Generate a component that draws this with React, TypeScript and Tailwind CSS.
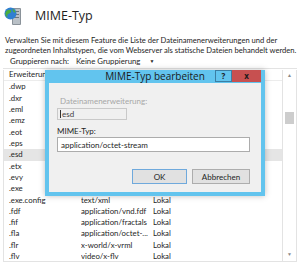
import React from 'react';

type Row = { ext: string; mime: string; sel?: boolean };

const rows: Row[] = [
  { ext: '.dwp', mime: 'application/octet-...' },
  { ext: '.dxr', mime: 'application/x-director' },
  { ext: '.eml', mime: 'message/rfc822' },
  { ext: '.emz', mime: 'application/octet-...' },
  { ext: '.eot', mime: 'application/vnd.ms-...' },
  { ext: '.eps', mime: 'application/postscript' },
  { ext: '.esd', mime: 'application/octet-...', sel: true },
  { ext: '.etx', mime: 'text/x-setext' },
  { ext: '.evy', mime: 'application/envoy' },
  { ext: '.exe', mime: 'application/octet-...' },
  { ext: '.exe.config', mime: 'text/xml' },
  { ext: '.fdf', mime: 'application/vnd.fdf' },
  { ext: '.fif', mime: 'application/fractals' },
  { ext: '.fla', mime: 'application/octet-...' },
  { ext: '.flr', mime: 'x-world/x-vrml' },
  { ext: '.flv', mime: 'video/x-flv' },
];

function MimeIcon() {
  return (
    <svg width="19" height="20" viewBox="0 0 19 20">
      <rect x="8" y="2" width="9" height="17" rx="1" fill="#8a9299" />
      <rect x="9" y="3" width="7" height="15" fill="#b9c0c6" />
      <rect x="10" y="5" width="5" height="1" fill="#6d757c" />
      <rect x="10" y="8" width="5" height="1" fill="#6d757c" />
      <rect x="10" y="11" width="5" height="1" fill="#6d757c" />
      <circle cx="6.5" cy="7.5" r="6" fill="#2f7fd1" />
      <path d="M3 4.5c1.5-1 3-1 4 0s-.5 2.5-2 3-2.5 2-1.5 3.5S2 11 1.5 9 1.8 5.4 3 4.5z" fill="#4caf3c" />
      <path d="M8.5 3c1.5.3 3 1.6 3 3.5-1 .4-2-.3-2.3-1.3S8 3.8 8.5 3z" fill="#4caf3c" />
    </svg>
  );
}

export default function App() {
  return (
    <div className="relative w-[300px] h-[264px] overflow-hidden bg-white text-[#1e1e1e] whitespace-nowrap font-['Lato','Open_Sans',sans-serif]">
      <div className="flex items-center h-[32px] pl-[4px]">
        <MimeIcon />
        <span className="ml-[12px] text-[12.5px] leading-none text-[#1e1e1e] font-['Open_Sans',sans-serif]">MIME-Typ</span>
      </div>
      <div className="px-[5px] mt-[3px] text-[7.6px] leading-[10px]">
        <div>Verwalten Sie mit diesem Feature die Liste der Dateinamenerweiterungen und der</div>
        <div>zugeordneten Inhaltstypen, die vom Webserver als statische Dateien behandelt werden.</div>
      </div>
      <div className="flex items-center h-[13px] mt-[1px] pl-[7px] text-[7.8px] border-b border-[#e3e3e3] mx-[3px]">
        <span>Gruppieren nach:</span>
        <span className="ml-[7px]">Keine Gruppierung</span>
        <span className="ml-[9px] text-[5px]">▼</span>
      </div>
      <div className="mx-[3px] mt-[1px] h-[192px] flex border border-[#e3e3e3] border-t-0">
        <div className="flex-1 overflow-hidden text-[7.8px]">
          <div className="flex items-center h-[11.4px] pl-[5px] border-b border-[#ececec]">
            <span className="w-[72px]">Erweiterung</span>
            <span className="w-[72px]">MIME-Typ</span>
            <span>Eintragstyp</span>
          </div>
          {rows.map((r) => (
            <div
              key={r.ext}
              className={`flex items-center h-[11.33px] pl-[5px] ${r.sel ? 'bg-[#e5e5e5]' : ''}`}
            >
              <span className="w-[72px]">{r.ext}</span>
              <span className="w-[68px] mr-[4px] overflow-hidden">{r.mime}</span>
              <span>Lokal</span>
            </div>
          ))}
        </div>
        <div className="w-[14px] flex flex-col border-l border-[#e3e3e3] bg-white">
          <div className="h-[12px] flex items-center justify-center text-[5px] text-[#8a8a8a]">▲</div>
          <div className="flex-1 px-[2px] pt-[30px]">
            <div className="h-[12px] bg-[#cdcdcd]" />
          </div>
          <div className="h-[12px] flex items-center justify-center text-[5px] text-[#8a8a8a]">▼</div>
        </div>
      </div>

      <div className="absolute left-[45px] top-[70px] w-[220px] h-[126px] bg-[#62c4ee] flex flex-col px-[4px] pb-[4px] shadow-[0_0_6px_rgba(0,0,0,0.25)]">
        <div className="relative h-[13px] flex items-center justify-center text-[10px] text-[#1a1a1a] font-['Open_Sans',sans-serif]">
          MIME-Typ bearbeiten
          <div className="absolute right-0 top-0 flex">
            <div className="w-[17px] h-[12px] border border-[#3b7ea3] flex items-center justify-center text-[8px] font-bold text-[#1a1a1a]">?</div>
            <div className="w-[29px] h-[12px] bg-[#c75050] flex items-center justify-center text-[8px] font-bold text-[#1a1a1a]">x</div>
          </div>
        </div>
        <div className="flex-1 bg-[#f0f0f0] flex flex-col pl-[8px] pr-[11px] text-[8px]">
          <div className="mt-[13px] pl-[3px] text-[#a7a7a7] leading-[10px]">Dateinamenerweiterung:</div>
          <div className="mt-[2px] w-[70px] h-[12px] border border-[#c9c9c9] bg-[#f0f0f0] flex items-center pl-[2px] text-[#444]">
            <span className="w-px h-[8px] bg-[#333] mr-[1px]" />esd
          </div>
          <div className="mt-[6px] leading-[10px]">MIME-Typ:</div>
          <div className="mt-[1px] h-[15px] border border-[#acacac] bg-white flex items-center pl-[3px]">application/octet-stream</div>
          <div className="mt-[17px] flex justify-end gap-[5px]">
            <div className="w-[55px] h-[15px] border border-[#6fa9dc] bg-[#e1e1e1] flex items-center justify-center">OK</div>
            <div className="w-[58px] h-[15px] border border-[#adadad] bg-[#e1e1e1] flex items-center justify-center">Abbrechen</div>
          </div>
        </div>
      </div>
    </div>
  );
}
